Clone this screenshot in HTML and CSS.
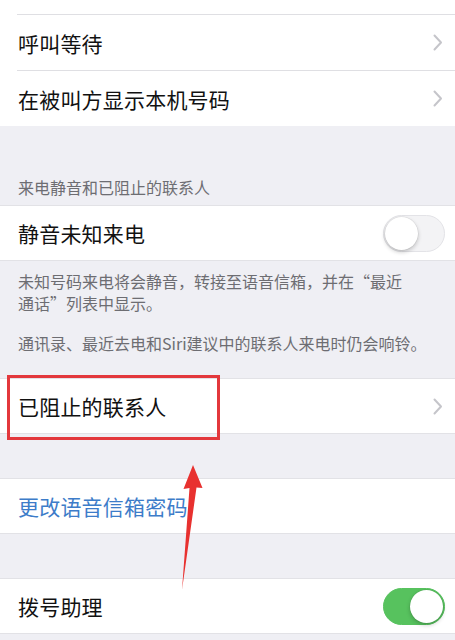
FILE: index.html
```html
<!DOCTYPE html>
<html lang="zh-CN">
  <head>
    <meta charset="UTF-8" />
    <meta name="viewport" content="width=device-width, initial-scale=1" />
    <title>电话设置</title>
    <link rel="stylesheet" href="styles.css">
  </head>
  <body>
    <!-- tail of the previous row, cut off by the screen edge -->
    <section class="group group-top">
      <div class="stub"></div>
      <div class="row">
        <span class="label">呼叫等待</span>
        <svg class="chevron" viewBox="0 0 10 17"><path d="M1.5 1.5 L8 8.5 L1.5 15.5" /></svg>
      </div>
      <div class="row">
        <span class="label">在被叫方显示本机号码</span>
        <svg class="chevron" viewBox="0 0 10 17"><path d="M1.5 1.5 L8 8.5 L1.5 15.5" /></svg>
      </div>
    </section>

    <h2 class="group-header">来电静音和已阻止的联系人</h2>
    <section class="group">
      <div class="row">
        <span class="label">静音未知来电</span>
        <span class="toggle"><span class="knob"></span></span>
      </div>
    </section>
    <div class="group-footer">
      <p>未知号码来电将会静音，转接至语音信箱，并在“最近<br />通话”列表中显示。</p>
      <p>通讯录、最近去电和Siri建议中的联系人来电时仍会响铃。</p>
    </div>

    <section class="group annotated">
      <div class="row">
        <span class="label">已阻止的联系人</span>
        <svg class="chevron" viewBox="0 0 10 17"><path d="M1.5 1.5 L8 8.5 L1.5 15.5" /></svg>
      </div>
      <div class="highlight"></div>
    </section>

    <div class="spacer"></div>
    <section class="group">
      <div class="row">
        <span class="label link">更改语音信箱密码</span>
      </div>
    </section>

    <div class="spacer"></div>
    <section class="group">
      <div class="row">
        <span class="label">拨号助理</span>
        <span class="toggle on"><span class="knob"></span></span>
      </div>
    </section>

    <!-- red annotation arrow drawn over the page -->
    <svg class="arrow" viewBox="0 0 36 140">
      <polygon points="18,10 27.5,33 21.5,32.5 7,135 14.5,33 8.5,34" />
    </svg>
  </body>
</html>
```

FILE: styles.css
```css
body {
  margin: 0;
  width: 455px;
  height: 640px;
  overflow: hidden;
  position: relative;
  background-color: #efeff4;
  font-family: "Noto Sans CJK SC", "Noto Sans", sans-serif;
  color: #111;
}
.group {
  background-color: #fff;
  border-top: 1px solid #e2e2e6;
  border-bottom: 1px solid #e2e2e6;
  position: relative;
}
.group-top {
  border-top: none;
  border-bottom: none;
}
.stub {
  height: 14px;
  margin-left: 17px;
  border-bottom: 1px solid #dfdfe3;
}
.row {
  display: flex;
  align-items: center;
  justify-content: space-between;
  height: 54px;
  margin-left: 17px;
  padding-left: 1px;
  padding-right: 10px;
}
.group-top .row {
  height: 55px;
  border-bottom: 1px solid #dfdfe3;
}
.group-top .row:last-child {
  border-bottom: none;
}
.label {
  font-size: 21px;
  line-height: 28px;
  letter-spacing: 0.2px;
}
.link {
  color: #3d7cc9;
}
.chevron {
  width: 10px;
  height: 17px;
  margin-right: 2px;
}
.chevron path {
  fill: none;
  stroke: #c5c5ca;
  stroke-width: 2;
  stroke-linecap: round;
  stroke-linejoin: round;
}
.group-header {
  margin: 0;
  padding: 50px 18px 7px;
  font-size: 16px;
  line-height: 22px;
  font-weight: normal;
  color: #6d6d72;
}
.group-footer {
  padding: 9px 6px 24px 18px;
  font-size: 16px;
  line-height: 22px;
  color: #6d6d72;
}
.group-footer p {
  margin: 0;
}
.group-footer p + p {
  margin-top: 18px;
}
.spacer {
  height: 44px;
}
.toggle {
  box-sizing: border-box;
  display: flex;
  align-items: center;
  width: 62px;
  height: 37px;
  padding: 1px;
  border-radius: 19px;
  background-color: #f3f3f5;
  border: 1px solid #e3e3e7;
}
.toggle .knob {
  width: 33px;
  height: 33px;
  border-radius: 50%;
  background-color: #fff;
  box-shadow: 0 2px 4px rgba(0, 0, 0, 0.22), 0 0 0 0.5px rgba(0, 0, 0, 0.08);
}
.toggle.on {
  justify-content: flex-end;
  background-color: #57c25e;
  border-color: #57c25e;
}
.highlight {
  position: absolute;
  left: 7px;
  top: -4px;
  width: 207px;
  height: 59px;
  border: 3px solid #e3383c;
}
.arrow {
  position: absolute;
  left: 175px;
  top: 455px;
  width: 36px;
  height: 140px;
}
.arrow polygon {
  fill: #e8312f;
}
```
